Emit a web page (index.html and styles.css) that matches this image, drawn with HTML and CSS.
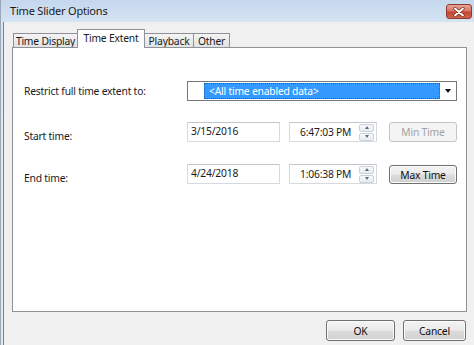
FILE: index.html
```html
<!DOCTYPE html>
<html>
<head>
<meta charset="utf-8">
<title>Time Slider Options</title>
<link rel="stylesheet" href="styles.css">
</head>
<body>
<div class="window">
  <div class="titlebar">
    <span class="title">Time Slider Options</span>
    <div class="close">
      <svg width="12" height="10" viewBox="0 0 12 10">
        <path d="M2 1.5 L10 8.5 M10 1.5 L2 8.5" stroke="#7a2a20" stroke-width="3.2" stroke-linecap="round"/>
        <path d="M2 1.5 L10 8.5 M10 1.5 L2 8.5" stroke="#ffffff" stroke-width="1.8" stroke-linecap="round"/>
      </svg>
    </div>
  </div>
  <div class="client">
    <div class="tabs">
      <div class="tab tab-display">Time Display</div>
      <div class="tab tab-extent active">Time Extent</div>
      <div class="tab tab-playback">Playback</div>
      <div class="tab tab-other">Other</div>
    </div>
    <div class="panel">
      <div class="row row-first">
        <div class="label">Restrict full time extent to:</div>
        <div class="combo">
          <div class="combo-blank"></div>
          <div class="combo-sel">&lt;All time enabled data&gt;</div>
          <div class="combo-btn"><span class="tri"></span></div>
        </div>
      </div>
      <div class="row row-second">
        <div class="label label-low">Start time:</div>
        <div class="field date">3/15/2016</div>
        <div class="field time">
          <span>6:47:03 PM</span>
          <div class="spin">
            <div class="spin-half"><span class="up"></span></div>
            <div class="spin-half"><span class="down"></span></div>
          </div>
        </div>
        <div class="btn btn-small disabled">Min Time</div>
      </div>
      <div class="row row-third">
        <div class="label label-low">End time:</div>
        <div class="field date">4/24/2018</div>
        <div class="field time">
          <span>1:06:38 PM</span>
          <div class="spin">
            <div class="spin-half"><span class="up"></span></div>
            <div class="spin-half"><span class="down"></span></div>
          </div>
        </div>
        <div class="btn btn-small">Max Time</div>
      </div>
    </div>
    <div class="footer">
      <div class="btn btn-ok">OK</div>
      <div class="btn btn-cancel">Cancel</div>
    </div>
  </div>
</div>
</body>
</html>
```

FILE: styles.css
```css
html, body {
  margin: 0;
  padding: 0;
  height: 345px;
  overflow: hidden;
}
body {
  font-family: "Noto Sans", "Open Sans", sans-serif;
  font-size: 10.3px;
  letter-spacing: -0.2px;
  color: #1b1b1b;
  background: #e9ecef;
}
* { box-sizing: border-box; }

.window {
  height: 345px;
  display: flex;
  flex-direction: column;
  background: linear-gradient(180deg, #c4d7ee 0px, #d6e4f3 22px, #e3e8ee 120px, #e8e8e8 345px);
  border-left: 1px solid #9aa7b6;
}

.titlebar {
  height: 22px;
  flex: none;
  display: flex;
  align-items: center;
  justify-content: space-between;
  padding: 0 2px 0 9px;
}
.title {
  font-size: 11px;
  color: #1a1a1a;
  line-height: 22px;
}
.close {
  width: 26px;
  height: 15px;
  margin-top: 1px;
  border: 1px solid #8d3a30;
  border-radius: 3px;
  background: linear-gradient(180deg, #e8a597 0%, #d67565 45%, #c24630 55%, #d0644c 100%);
  display: flex;
  align-items: center;
  justify-content: center;
}
.close svg { display: block; }

.client {
  flex: 1;
  margin-left: 2px;
  border-left: 1px solid #7c8184;
  background: #f0f0f0;
  padding: 7px 7px 0 8px;
  display: flex;
  flex-direction: column;
}

.tabs {
  height: 18px;
  display: flex;
  align-items: flex-end;
  padding-left: 1px;
}
.tab {
  height: 14px;
  border: 1px solid #8e9197;
  border-bottom: 0;
  margin-right: -1px;
  background: linear-gradient(180deg, #f4f4f4, #e2e2e2);
  display: flex;
  align-items: center;
  justify-content: center;
  line-height: 13px;
  padding-top: 1px;
  white-space: nowrap;
}
.tab.active {
  height: 19px;
  margin-bottom: -1px;
  background: #ffffff;
  position: relative;
  z-index: 1;
  padding-top: 0;
  padding-bottom: 2px;
}
.tab-display { width: 65px; }
.tab-extent { width: 68px; }
.tab-playback { width: 50px; }
.tab-other { width: 37px; }

.panel {
  height: 265px;
  flex: none;
  border: 1px solid #8e9197;
  background: #ffffff;
  padding: 33px 0 0 11px;
  display: flex;
  flex-direction: column;
}

.row {
  height: 20px;
  display: flex;
  align-items: stretch;
}
.row-second { margin-top: 21px; }
.row-third { margin-top: 22px; }

.label {
  width: 163px;
  flex: none;
  display: flex;
  align-items: center;
  line-height: 15px;
  white-space: nowrap;
}
.label-low {
  align-items: flex-start;
  padding-top: 7px;
}

.combo {
  width: 270px;
  display: flex;
  border: 1px solid #767676;
  background: #ffffff;
  padding: 1px 1px 1px 0;
}
.combo-blank {
  width: 16px;
  flex: none;
}
.combo-sel {
  flex: 1;
  background: #3399ff;
  color: #ffffff;
  border: 1px dotted #1d5fa8;
  padding-left: 4px;
  display: flex;
  align-items: center;
}
.combo-btn {
  width: 15px;
  flex: none;
  display: flex;
  align-items: center;
  justify-content: center;
  background: #ffffff;
}
.tri {
  width: 0;
  height: 0;
  border-left: 3px solid transparent;
  border-right: 3px solid transparent;
  border-top: 4px solid #111111;
}

.field {
  height: 20px;
  border: 1px solid #d6d9dd;
  border-top-color: #c3c7cc;
  background: #ffffff;
  display: flex;
  align-items: center;
  white-space: nowrap;
}
.date {
  width: 93px;
  padding-left: 3px;
  padding-bottom: 2px;
}
.time {
  width: 88px;
  margin-left: 9px;
  padding-left: 10px;
  padding-right: 2px;
  justify-content: space-between;
}
.spin {
  width: 15px;
  height: 17px;
  display: flex;
  flex-direction: column;
  gap: 1px;
}
.spin-half {
  flex: 1;
  border: 1px solid #c9d1dc;
  border-radius: 2px;
  background: linear-gradient(180deg, #f8f9fb, #e8ebf0);
  display: flex;
  align-items: center;
  justify-content: center;
}
.up, .down {
  width: 0;
  height: 0;
  border-left: 2.5px solid transparent;
  border-right: 2.5px solid transparent;
}
.up { border-bottom: 3px solid #5a6e8c; }
.down { border-top: 3px solid #5a6e8c; }

.btn {
  border: 1px solid #707070;
  border-radius: 3px;
  background: linear-gradient(180deg, #f3f3f3 0%, #ebebeb 48%, #dddddd 52%, #cfcfcf 100%);
  display: flex;
  align-items: center;
  justify-content: center;
  color: #111111;
  box-shadow: inset 0 0 0 1px #fbfbfb;
  white-space: nowrap;
}
.btn-small {
  width: 68px;
  margin-left: 12px;
}
.row-third .btn-small {
  margin-top: 1px;
  height: 19px;
}
.btn.disabled {
  border-color: #c4c4c4;
  background: #f4f4f4;
  color: #a3a3a3;
  box-shadow: none;
}

.footer {
  display: flex;
  justify-content: flex-end;
  gap: 8px;
  margin-top: 8px;
  padding-right: 1px;
}
.btn-ok {
  width: 69px;
  height: 21px;
}
.btn-cancel {
  width: 63px;
  height: 21px;
}
```
